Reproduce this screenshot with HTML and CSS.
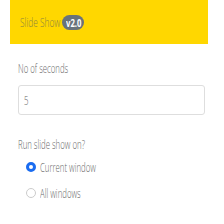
FILE: index.html
```html
<!DOCTYPE html>
<html lang="en">
<head>
  <meta charset="UTF-8" />
  <title>Slide Show</title>
  <link rel="stylesheet" href="styles.css">
</head>
<body>
  <div class="header">
    <span class="squeeze title">Slide Show</span>
    <a class="badge" href="#"><span class="squeeze">v2.0</span></a>
  </div>

  <div class="form">
    <label class="label"><span class="squeeze">No of seconds</span></label>
    <div class="input"><span class="squeeze">5</span></div>

    <p class="label question"><span class="squeeze">Run slide show on?</span></p>

    <div class="option">
      <span class="radio checked"></span>
      <span class="squeeze">Current window</span>
    </div>
    <div class="option">
      <span class="radio"></span>
      <span class="squeeze">All windows</span>
    </div>
  </div>
</body>
</html>
```

FILE: styles.css
```css
* {
  margin: 0;
  padding: 0;
  box-sizing: border-box;
}

body {
  background: #fff;
  font-family: 'Open Sans', sans-serif;
  font-weight: 300;
  font-size: 13px;
  color: #666;
  width: 224px;
  height: 224px;
  overflow: hidden;
}

.squeeze {
  display: inline-block;
  transform: scaleX(0.6);
  transform-origin: left center;
  white-space: nowrap;
}

.header {
  background: #ffd700;
  margin: 0 16px 0 10px;
  height: 44px;
  padding: 0 0 0 10px;
  display: flex;
  align-items: center;
}

.title {
  color: #8a8240;
  width: 42px;
  transform: scaleX(0.64);
}

.badge {
  background: #69737b;
  color: #fff;
  border-radius: 8px;
  font-size: 11px;
  font-weight: bold;
  height: 15px;
  width: 22px;
  padding-left: 4px;
  line-height: 15px;
  text-decoration: underline;
  display: inline-block;
}

.badge .squeeze {
  transform: scaleX(0.7);
}

.form {
  padding: 14px 19px 0 18px;
}

.label {
  display: block;
  height: 20px;
  line-height: 20px;
  margin-bottom: 7px;
}

.input {
  height: 30px;
  border: 1px solid #dedede;
  border-radius: 3px;
  padding-left: 5px;
  line-height: 28px;
  margin-bottom: 19px;
}

.label.question {
  margin-bottom: 0;
}

.option {
  display: flex;
  align-items: center;
  height: 26px;
  padding-left: 8px;
}

.radio {
  width: 10px;
  height: 10px;
  border-radius: 50%;
  border: 1px solid #ccc;
  margin-right: 4px;
  flex-shrink: 0;
}

.radio.checked {
  border: 3px solid #1a6cf0;
}
```
